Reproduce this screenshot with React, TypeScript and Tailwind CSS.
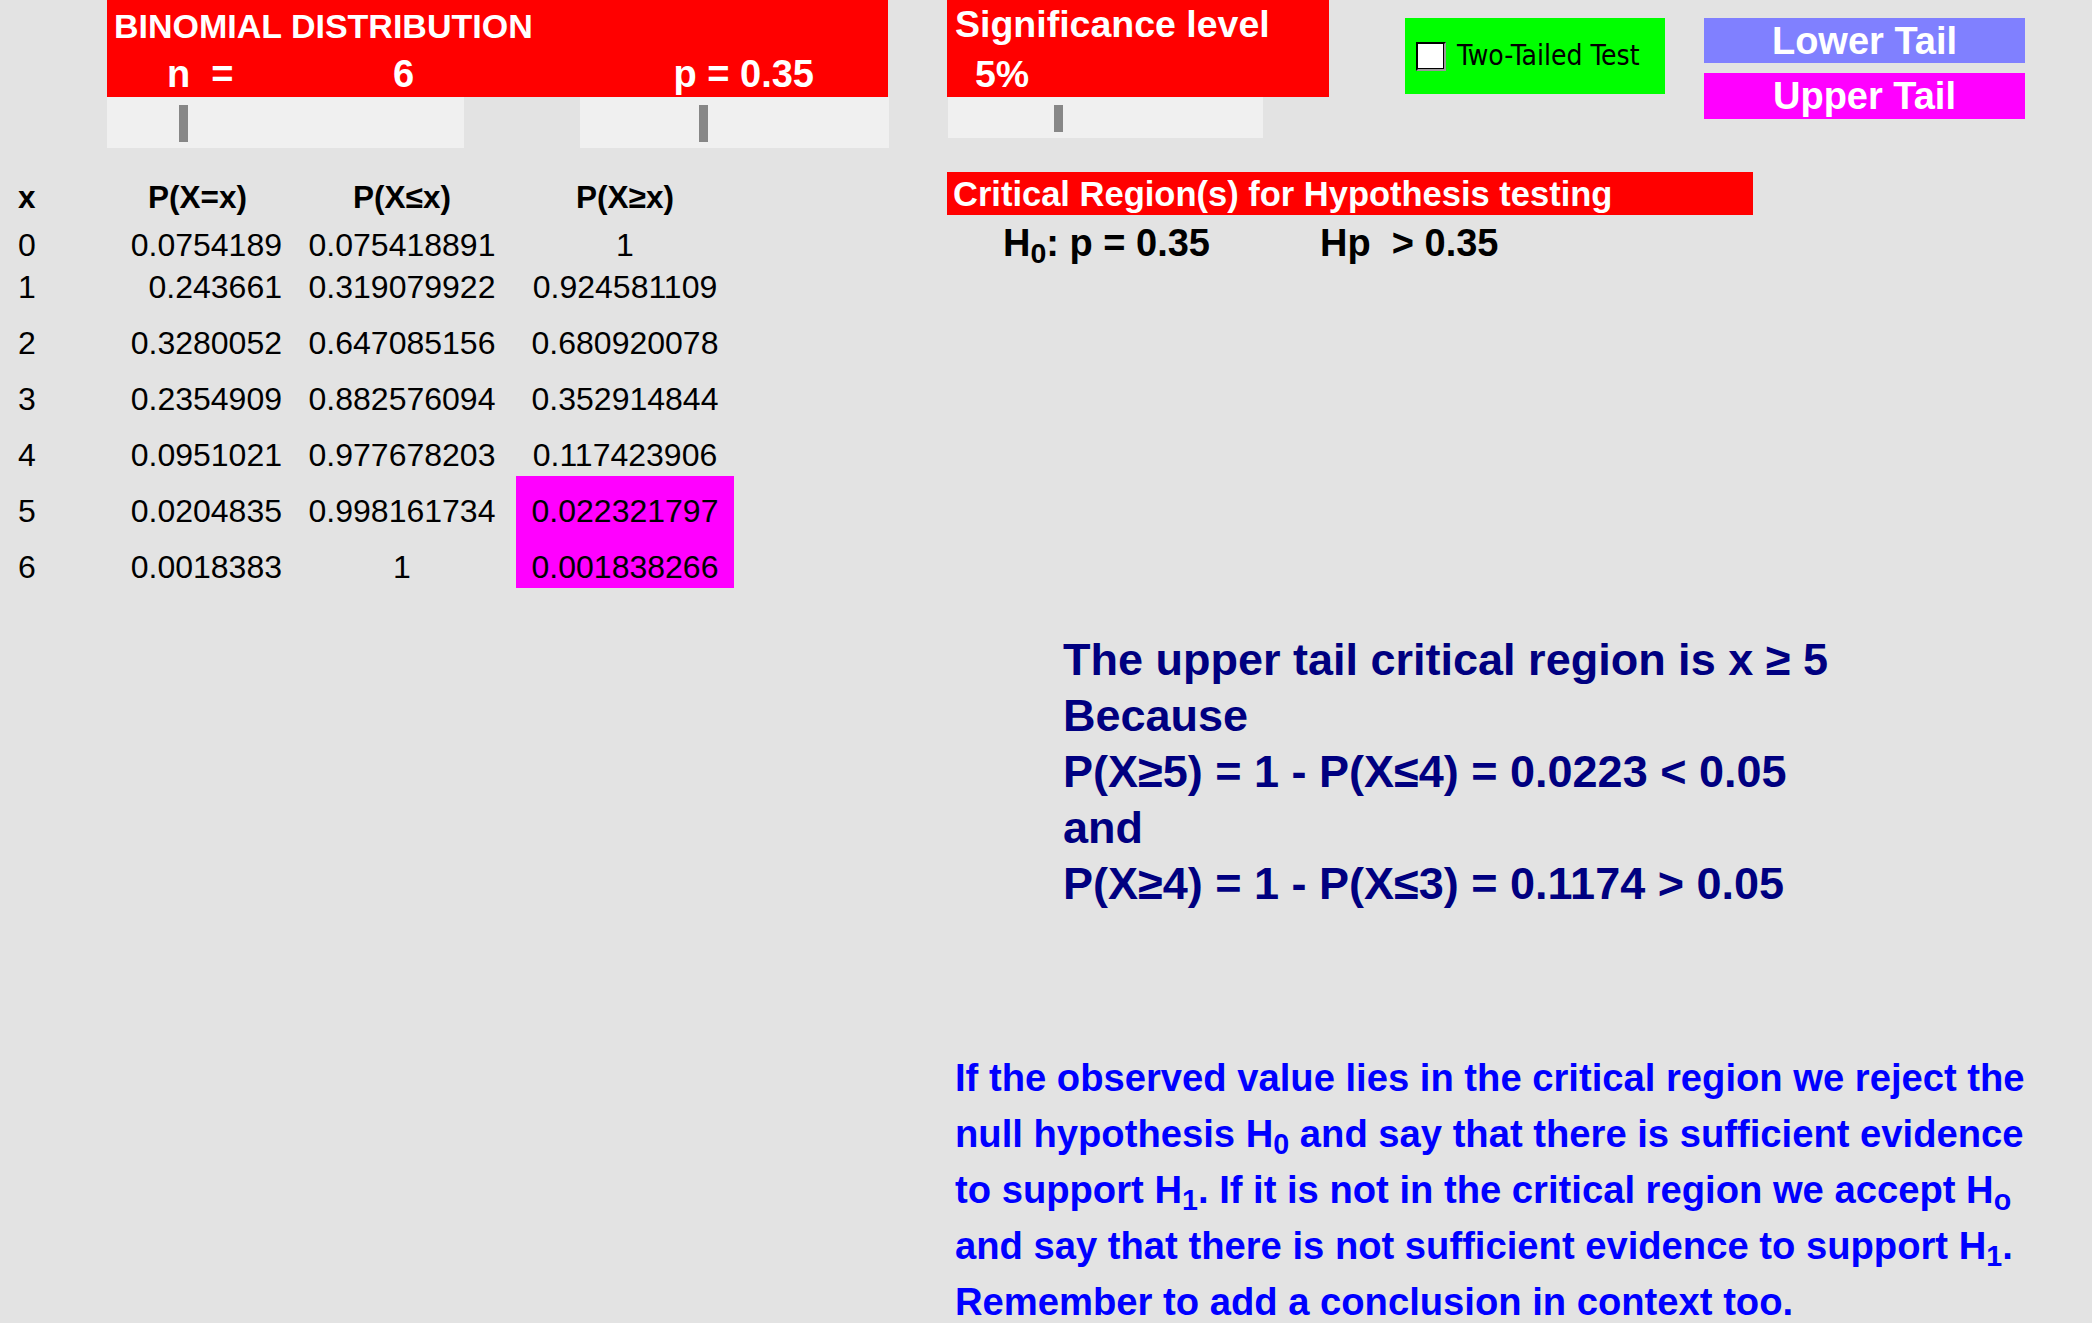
import React from "react";

// Binomial distribution worksheet: n = 6, p = 0.35, 5% upper tail test.

const ROWS: { x: string; eq: string; le: string; ge: string; hit?: boolean; h: string }[] = [
  { x: "0", eq: "0.0754189", le: "0.075418891", ge: "1", h: "h-[48px]" },
  { x: "1", eq: "0.243661", le: "0.319079922", ge: "0.924581109", h: "h-[42px]" },
  { x: "2", eq: "0.3280052", le: "0.647085156", ge: "0.680920078", h: "h-[56px]" },
  { x: "3", eq: "0.2354909", le: "0.882576094", ge: "0.352914844", h: "h-[56px]" },
  { x: "4", eq: "0.0951021", le: "0.977678203", ge: "0.117423906", h: "h-[56px]" },
  { x: "5", eq: "0.0204835", le: "0.998161734", ge: "0.022321797", hit: true, h: "h-[56px]" },
  { x: "6", eq: "0.0018383", le: "1", ge: "0.001838266", hit: true, h: "h-[56px]" },
];

const COLS = "grid grid-cols-[107px_181px_228px_218px]";

function Slider({ width, thumb }: { width: string; thumb: string }) {
  return (
    <div className={`${width} h-[51px] bg-[#f0f0f0] pt-[8px] ${thumb}`}>
      <div className="w-[9px] h-[37px] bg-[#878787]" />
    </div>
  );
}

function Table() {
  return (
    <div className="text-black">
      <div className={`${COLS} h-[70px] font-bold text-[31.5px]`}>
        <div className="flex items-end pl-[18px]"><span className="leading-[40px] pb-[1px]">x</span></div>
        <div className="flex items-end justify-center"><span className="leading-[40px] pb-[1px]">P(X=x)</span></div>
        <div className="flex items-end justify-center"><span className="leading-[40px] pb-[1px]">P(X≤x)</span></div>
        <div className="flex items-end justify-center"><span className="leading-[40px] pb-[1px]">P(X≥x)</span></div>
      </div>
      {ROWS.map((r) => (
        <div key={r.x} className={`${COLS} ${r.h} text-[32px]`}>
          <div className="flex items-end pl-[18px]"><span className="leading-[40px] pb-[1px]">{r.x}</span></div>
          <div className="flex items-end justify-end pr-[6px]"><span className="leading-[40px] pb-[1px]">{r.eq}</span></div>
          <div className="flex items-end justify-center"><span className="leading-[40px] pb-[1px]">{r.le}</span></div>
          <div className={`flex items-end justify-center ${r.hit ? "bg-[#ff00ff]" : ""}`}>
            <span className="leading-[40px] pb-[1px]">{r.ge}</span>
          </div>
        </div>
      ))}
    </div>
  );
}

export default function App() {
  return (
    <div className="w-[2092px] h-[1323px] overflow-hidden bg-[#e3e3e3] font-['Liberation_Sans',Arial,sans-serif] flex">
      {/* left: distribution inputs and table */}
      <div className="w-[947px] shrink-0">
        <div className="ml-[107px] w-[781px] h-[97px] bg-[#ff0000] text-white font-bold">
          <div className="h-[50px] leading-[52px] text-[34px] pl-[7px]">BINOMIAL DISTRIBUTION</div>
          <div className="h-[47px] leading-[48px] text-[38px] flex whitespace-pre">
            <span className="w-[286px] pl-[60px]">n  =</span>
            <span>6</span>
            <span className="ml-auto pr-[74px]">p = 0.35</span>
          </div>
        </div>
        <div className="ml-[107px] flex gap-[116px]">
          <Slider width="w-[357px]" thumb="pl-[72px]" />
          <Slider width="w-[309px]" thumb="pl-[119px]" />
        </div>
        <Table />
      </div>

      {/* right: test settings and conclusion */}
      <div className="flex-1">
        <div className="flex items-start">
          <div className="w-[382px]">
            <div className="h-[97px] bg-[#ff0000] text-white font-bold text-[37.5px]">
              <div className="h-[46px] leading-[48px] pl-[8px] whitespace-nowrap">Significance level</div>
              <div className="h-[51px] leading-[56px] pl-[28px]">5%</div>
            </div>
            <div className="w-[315px] h-[41px] bg-[#f0f0f0] ml-[1px] pt-[8px] pl-[106px]">
              <div className="w-[9px] h-[27px] bg-[#878787]" />
            </div>
          </div>
          <div className="ml-[76px] mt-[18px] w-[260px] h-[76px] bg-[#00ff00] flex items-center pl-[11px] gap-[11px]">
            <div className="w-[30px] h-[29px] shrink-0 bg-white border-2 border-black border-r-[#9a9a9a] border-b-[#9a9a9a] shadow-[inset_-1px_-1px_0_#000]" />
            <span className="text-[28px] text-black font-['DejaVu_Sans_Condensed','Liberation_Sans',sans-serif] whitespace-nowrap">
              Two-Tailed Test
            </span>
          </div>
          <div className="ml-[39px] mt-[18px] w-[321px] flex flex-col gap-[10px] text-white font-bold text-[38px]">
            <div className="h-[45px] leading-[47px] bg-[#8080ff] text-center">Lower Tail</div>
            <div className="h-[46px] leading-[47px] bg-[#ff00ff] text-center">Upper Tail</div>
          </div>
        </div>

        <div className="mt-[34px] w-[806px] h-[43px] leading-[45px] bg-[#ff0000] text-white font-bold text-[34.5px] pl-[6px] whitespace-nowrap">
          Critical Region(s) for Hypothesis testing
        </div>
        <div className="h-[48px] leading-[56px] text-[38px] font-bold text-black pl-[56px] flex whitespace-pre">
          <span className="w-[317px]">
            H<sub>0</sub>: p = 0.35
          </span>
          <span>Hp  &gt; 0.35</span>
        </div>

        <div className="mt-[369px] pl-[116px] text-[45px] leading-[56px] font-bold text-[#000080] whitespace-nowrap">
          <div>The upper tail critical region is x ≥ 5</div>
          <div>Because</div>
          <div>P(X≥5) = 1 - P(X≤4) = 0.0223 &lt; 0.05</div>
          <div>and</div>
          <div>P(X≥4) = 1 - P(X≤3) = 0.1174 &gt; 0.05</div>
        </div>

        <div className="mt-[138px] pl-[8px] text-[38.2px] leading-[56px] font-bold text-[#0000ff] whitespace-nowrap">
          <div>If the observed value lies in the critical region we reject the</div>
          <div>
            null hypothesis H<sub>0</sub> and say that there is sufficient evidence
          </div>
          <div>
            to support H<sub>1</sub>. If it is not in the critical region we accept H<sub>o</sub>
          </div>
          <div>
            and say that there is not sufficient evidence to support H<sub>1</sub>.
          </div>
          <div>Remember to add a conclusion in context too.</div>
        </div>
      </div>
    </div>
  );
}
